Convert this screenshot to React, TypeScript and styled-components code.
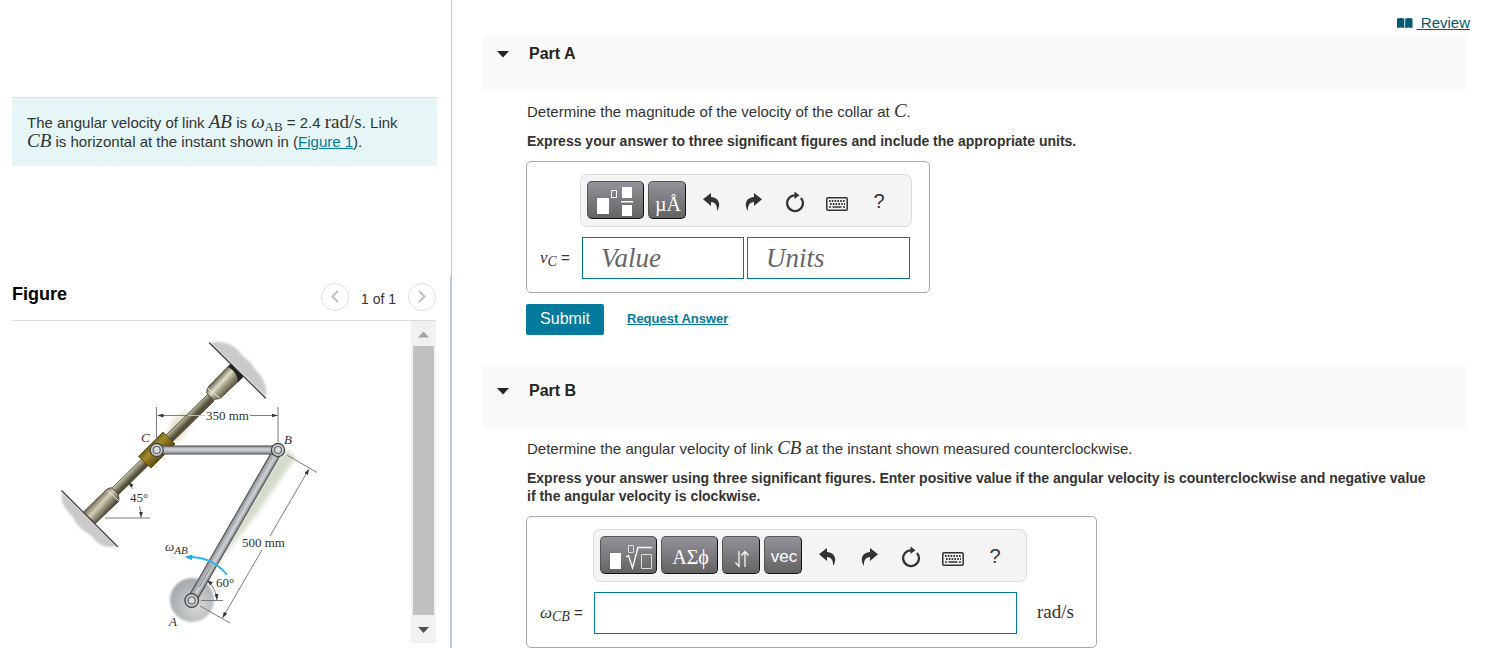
import React from "react";
import styled, { createGlobalStyle } from "styled-components";

const sans = `"Liberation Sans", Arial, sans-serif`;
const serif = `"Liberation Serif", "Times New Roman", serif`;
const teal = "#047a9c";

const GlobalStyle = createGlobalStyle`
  *, *::before, *::after { box-sizing: border-box; }
  body {
    margin: 0;
    background: #fff;
    color: #333;
    font-family: ${sans};
    font-size: 15px;
    line-height: 18px;
  }
  p, h2, h3 { margin: 0; }
  button, input { font-family: inherit; }
`;

const Page = styled.div`
  display: flex;
  align-items: flex-start;
  min-height: 100vh;
`;

const Side = styled.aside`
  flex: 0 0 452px;
  position: sticky;
  top: 0;
  display: flex;
  flex-direction: column;
  height: 100vh;
`;

const IntroPane = styled.section`
  height: 276px;
  padding: 97px 14px 0 12px;
  border-right: 1px solid #c3ccd6;
`;

const Intro = styled.p`
  padding: 15px 14px 15px 15px;
  border-top: 1px solid #d3e3e3;
  background: #e6f6f7;
  line-height: 19px;
`;

const FigurePane = styled.section`
  flex: 1;
  display: flex;
  flex-direction: column;
  padding: 0 14px 5px 12px;
  border-right: 2px solid #b9cce0;
`;

const FigureBar = styled.header`
  display: flex;
  align-items: center;
  justify-content: space-between;
  height: 45px;
  padding-bottom: 5px;
  border-bottom: 1px solid #dcdcdc;
`;

const FigureTitle = styled.h2`
  color: #000;
  font-size: 18px;
  line-height: 24px;
  padding-bottom: 3px;
`;

const Pager = styled.div`
  display: flex;
  align-items: center;
  gap: 12px;
  font-size: 14px;
  padding-top: 2px;
`;

const PagerButton = styled.button`
  display: grid;
  place-items: center;
  width: 28px;
  height: 28px;
  padding: 0;
  border: 1px solid #e0e0e0;
  border-radius: 50%;
  background: #fff;
`;

const PagerText = styled.span`
  padding-top: 4px;
`;

const FigureView = styled.div`
  flex: 1;
  display: flex;
  min-height: 0;
`;

const Drawing = styled.svg`
  flex: 1;
  min-width: 0;
  height: 322px;
  font-family: ${serif};
`;

const ScrollTrack = styled.div`
  display: flex;
  flex-direction: column;
  align-items: center;
  width: 25px;
  background: #f1f1f1;
`;

const ScrollThumb = styled.div`
  flex: 1;
  width: 21px;
  background: #c1c1c1;
`;

const ScrollArrow = styled.svg<{ $height: number }>`
  width: 25px;
  height: ${(p) => p.$height}px;
`;

const Main = styled.main`
  flex: 1;
  min-width: 0;
  padding: 0 19px 0 30px;
`;

const TopLinks = styled.nav`
  display: flex;
  justify-content: flex-end;
  align-items: center;
  gap: 4px;
  height: 36px;
  margin-right: -4px;
  padding-top: 10px;
`;

const Link = styled.a<{ $tone?: string }>`
  color: ${(p) => p.$tone ?? teal};
  text-decoration: underline;
`;

const ReviewLink = styled(Link)`
  white-space: pre;
`;

const PartHeader = styled.header<{ $tall?: boolean }>`
  display: flex;
  align-items: center;
  gap: 20px;
  padding: ${(p) => (p.$tall ? "17px 15px 28px" : "9px 15px 28px")};
  background: #f9f9f9;
`;

const PartTitle = styled.h3`
  color: #252525;
  font-size: 16px;
  line-height: 18px;
`;

const Toggle = styled.button`
  display: grid;
  padding: 0;
  border: 0;
  background: none;
`;

const PartBody = styled.div`
  display: flex;
  flex-direction: column;
  align-items: flex-start;
  gap: 11px;
  padding: 12px 0 30px 44px;
`;

const Prompt = styled.p<{ $strong?: boolean }>`
  padding-left: 1px;
  font-size: ${(p) => (p.$strong ? 14 : 15)}px;
  font-weight: ${(p) => (p.$strong ? 700 : 400)};
`;

const M = styled.span<{ $upright?: boolean; $size?: number }>`
  font-family: ${serif};
  font-style: ${(p) => (p.$upright ? "normal" : "italic")};
  font-size: ${(p) => p.$size ?? 19}px;
  line-height: 1px;
`;

const Sub = styled.sub<{ $upright?: boolean }>`
  font-style: ${(p) => (p.$upright ? "normal" : "italic")};
  font-size: ${(p) => (p.$upright ? 13 : 14)}px;
  line-height: 1px;
  vertical-align: -3px;
`;

const AnswerBox = styled.div`
  display: flex;
  flex-direction: column;
  gap: 10px;
  height: 132px;
  padding: 12px 17px 13px 13px;
  border: 1px solid #a9a9a9;
  border-radius: 5px;
`;

const Toolbar = styled.div<{ $indent: number; $width: number }>`
  display: flex;
  align-items: center;
  gap: 4px;
  width: ${(p) => p.$width}px;
  height: 53px;
  margin-left: ${(p) => p.$indent}px;
  padding: 0 6px;
  border: 1px solid #dcdcdc;
  border-radius: 7px;
  background: #f4f4f4;
`;

const Key = styled.button<{ $wide?: boolean }>`
  display: grid;
  place-items: center;
  width: ${(p) => (p.$wide ? 57 : 38)}px;
  height: 38px;
  margin-bottom: 1px;
  padding: 0;
  border: 1px solid;
  border-color: #555 #111 #111 #555;
  border-radius: 5px;
  background: linear-gradient(#94929a, #636363);
  color: #fff;
`;

const KeyText = styled.span<{ $serif?: boolean; $low?: boolean }>`
  padding: ${(p) => (p.$low ? 8 : 3)}px 0 0 2px;
  font-family: ${(p) => (p.$serif ? serif : sans)};
  font-size: ${(p) => (p.$serif ? 20 : 17)}px;
  line-height: 20px;
`;

const Tools = styled.div`
  display: flex;
`;

const Tool = styled.button`
  display: grid;
  place-items: center;
  width: 42px;
  height: 38px;
  padding: 2px 0 0;
  border: 0;
  background: none;
  color: #333;
  font-size: 20px;
`;

const EntryRow = styled.div`
  display: flex;
  align-items: center;
  gap: 3px;
`;

const EntryLabel = styled.label<{ $width: number }>`
  width: ${(p) => p.$width}px;
  white-space: nowrap;
`;

const Field = styled.input<{ $width: number }>`
  width: ${(p) => p.$width}px;
  height: 42px;
  padding: 0 18px;
  border: 1px solid ${teal};
  border-radius: 0;
  background: #fff;
  font-family: ${serif};
  font-size: 27px;
  font-style: italic;
  &::placeholder { color: #666; opacity: 1; }
`;

const Unit = styled.span`
  width: 59px;
  padding-left: 17px;
`;

const Actions = styled.div`
  display: flex;
  align-items: center;
  gap: 23px;
`;

const Submit = styled.button`
  width: 78px;
  height: 31px;
  padding: 0 0 2px;
  border: 0;
  border-radius: 2px;
  background: ${teal};
  color: #fff;
  font-size: 16px;
`;

const RequestLink = styled(Link)`
  padding-bottom: 2px;
  font-size: 13px;
  font-weight: 700;
`;

const UndoShape = () => (
  <path d="M0 6.2 8 0v3.9c5 .3 8.2 3.2 8.2 7.7 0 2.400-.9 4.500-2.100 6.400C14.300 12.600 12.500 9.300 8 9v3.900z" fill="#333" />
);

const EditTools = () => (
  <Tools>
    <Tool aria-label="Undo">
      <svg width="17" height="18"><UndoShape /></svg>
    </Tool>
    <Tool aria-label="Redo">
      <svg width="17" height="18"><g transform="translate(17 0) scale(-1 1)"><UndoShape /></g></svg>
    </Tool>
    <Tool aria-label="Reset">
      <svg width="20" height="22" fill="none">
        <path d="M10.5 4.300A7.900 7.900 0 1 0 15.900 6.900" stroke="#333" strokeWidth="2.3" />
        <path d="M9.500.500 14.500 4.300 9.500 8z" fill="#333" />
      </svg>
    </Tool>
    <Tool aria-label="Keyboard">
      <svg width="22" height="18" fill="none">
        <rect x=".8" y="4.8" width="20.4" height="12.4" rx="1.2" stroke="#333" strokeWidth="1.5" />
        <path d="M3 8h16M4 11h15" stroke="#333" strokeWidth="1.8" strokeDasharray="1.6 1.2" />
        <path d="M3 14h2M6.500 14h9M17 14h2" stroke="#333" strokeWidth="1.5" />
      </svg>
    </Tool>
    <Tool aria-label="Help">?</Tool>
  </Tools>
);

const Caret = () => (
  <svg width="12" height="7"><path d="M0 0h12L6 6.500z" fill="#252525" /></svg>
);

const Mechanism = () => (
  <Drawing viewBox="12 321 399 322" role="img" aria-label="Collar and link mechanism">
    <defs>
      <linearGradient id="rod" gradientUnits="userSpaceOnUse" x1="137" y1="457" x2="145" y2="465">
        <stop offset="0" stopColor="#66614b" />
        <stop offset=".35" stopColor="#d6d4bc" />
        <stop offset=".6" stopColor="#a39f84" />
        <stop offset="1" stopColor="#54503c" />
      </linearGradient>
      <linearGradient id="cylinder" gradientUnits="userSpaceOnUse" x1="218" y1="376" x2="232" y2="389">
        <stop offset="0" stopColor="#5f5b45" />
        <stop offset=".35" stopColor="#e0dfcb" />
        <stop offset=".55" stopColor="#aaa78d" />
        <stop offset="1" stopColor="#4e4936" />
      </linearGradient>
      <linearGradient id="cylinderLow" gradientUnits="userSpaceOnUse" x1="94" y1="501" x2="107" y2="513">
        <stop offset="0" stopColor="#6f6a50" />
        <stop offset=".4" stopColor="#d2d0b8" />
        <stop offset="1" stopColor="#4b4633" />
      </linearGradient>
      <linearGradient id="collar" gradientUnits="userSpaceOnUse" x1="150" y1="444" x2="163" y2="456">
        <stop offset="0" stopColor="#6f5c10" />
        <stop offset=".35" stopColor="#a28a2c" />
        <stop offset="1" stopColor="#5c4b08" />
      </linearGradient>
      <linearGradient id="bar" x1="0" y1="0" x2="0" y2="1">
        <stop offset="0" stopColor="#85888b" />
        <stop offset=".4" stopColor="#d2d5d7" />
        <stop offset="1" stopColor="#8d9093" />
      </linearGradient>
      <radialGradient id="disc" cx=".6" cy=".65" r=".65">
        <stop offset="0" stopColor="#d7d9da" />
        <stop offset="1" stopColor="#a4a7aa" />
      </radialGradient>
      <filter id="soft" x="-20%" y="-20%" width="140%" height="140%"><feGaussianBlur stdDeviation="2" /></filter>
      <filter id="softer" x="-20%" y="-20%" width="140%" height="140%"><feGaussianBlur stdDeviation="0.8" /></filter>
      <marker id="tip" viewBox="0 0 6 4" refX="6" refY="2" markerWidth="6" markerHeight="4" markerUnits="userSpaceOnUse" orient="auto-start-reverse">
        <path d="M0 0 6 2 0 4z" fill="#333" />
      </marker>
    </defs>

    <path d="M172 420 184 410 194 421 178 444 166 436z" fill="#e6e6d2" filter="url(#soft)" />
    <path d="M276 458 288 450 296 457 256 515 216 566z" fill="#d5dbca" filter="url(#soft)" />

    <g filter="url(#softer)" fill="#cbc9ca">
      <path d="M210 343C218 341 229 342 238 350 243 358 251 361 254 368 260 374 268 384 266 397z" />
      <path d="M62 492C60 503 66 510 73 517 75 524 83 531 92 536 98 545 106 549 117 546z" />
    </g>
    <path d="M209 342.500 266 398.500M61.500 490.500 118 547" stroke="#3d3d3d" strokeWidth="1.2" />

    <circle cx="192" cy="600" r="22" fill="url(#disc)" filter="url(#softer)" />

    <g stroke="#3c392c" strokeWidth=".8">
      <path d="M208 394 111 489 118 495 214 401z" fill="url(#rod)" />
      <path d="M230 364.500 207.500 387.500 206.500 393 213.500 399.500 220 398.500 243 377z" fill="url(#cylinder)" />
      <path d="M106.500 489.500 111 487.500 118.500 494 119 501 95.500 523.500 83.500 512z" fill="url(#cylinderLow)" />
    </g>
    <path d="M230.500 364 243 376.500 238 382C238 376 234 370 228 367z" fill="#222" />
    <path d="M207 387.500 220 398.500M107 490 119 501" stroke="#f0efdf" strokeWidth="1" />
    <path d="M163 432 175 444 151 468 138.500 456.500z" fill="url(#collar)" stroke="#4c3f0c" strokeWidth=".8" />

    <g transform="translate(278 450) rotate(119.9)">
      <rect x="0" y="-4.5" width="173" height="9" fill="url(#bar)" stroke="#4a4a4a" strokeWidth="1" />
      <path d="M132 0H158" stroke="#888" strokeWidth="1" />
    </g>
    <rect x="157" y="446" width="121" height="8" fill="url(#bar)" stroke="#4a4a4a" strokeWidth="1" />
    <g fill="#c7cacc" stroke="#3f3f3f" strokeWidth="1.2">
      <circle cx="156.7" cy="450" r="6.6" />
      <circle cx="278" cy="450" r="6.6" />
      <circle cx="191.7" cy="600.5" r="6.8" />
      <g fill="#d9dbdc" stroke="#666">
        <circle cx="156.7" cy="450" r="3.5" />
        <circle cx="278" cy="450" r="3.5" />
        <circle cx="191.7" cy="600.5" r="3.5" />
      </g>
    </g>

    <g stroke="#707070" strokeWidth=".9" fill="none">
      <path d="M156.500 407V442M278 407V442" />
      <path d="M190 415.500H157.500" markerEnd="url(#tip)" />
      <path d="M250 415.500H277.500" markerEnd="url(#tip)" />
      <path d="M105 518H150M201 600.500H223M287 455 317 472.500M200 606 230 623" />
      <path d="M128 482Q131 485 133 489" markerStart="url(#tip)" />
      <path d="M139.500 506Q141 511 141 517.500" markerEnd="url(#tip)" />
      <path d="M207 580Q216 588 217 600" markerStart="url(#tip)" markerEnd="url(#tip)" />
      <path d="M270 536 309 469" markerEnd="url(#tip)" />
      <path d="M262 550 222.500 618" markerEnd="url(#tip)" />
    </g>
    <path d="M188 415.500H205" stroke="#c9c9b9" strokeWidth=".9" />
    <path d="M227 575Q214 558 191 557" stroke="#2fb5ef" strokeWidth="1.8" fill="none" />
    <path d="M184.500 557 192.500 554.500 192 560z" fill="#18a9ea" />

    <g fill="#333" fontSize="13">
      <text x="206" y="420">350 mm</text>
      <text x="242" y="547">500 mm</text>
      <text x="130" y="502">45°</text>
      <text x="216" y="587">60°</text>
      <g fontStyle="italic">
        <text x="141" y="442">C</text>
        <text x="284" y="444">B</text>
        <text x="169" y="626">A</text>
        <text x="165" y="551">ω<tspan fontSize="11" dy="3">AB</tspan></text>
      </g>
    </g>
  </Drawing>
);

export default function App() {
  return (
    <Page>
      <GlobalStyle />
      <Side>
        <IntroPane>
          <Intro>
            The angular velocity of link <M>AB</M> is <M>ω<Sub $upright>AB</Sub></M> = 2.4 <M $upright>rad/s</M>. Link{" "}
            <M>CB</M>&nbsp;is horizontal at the instant shown in (<Link href="#figure">Figure 1</Link>).
          </Intro>
        </IntroPane>
        <FigurePane id="figure">
          <FigureBar>
            <FigureTitle>Figure</FigureTitle>
            <Pager>
              <PagerButton aria-label="Previous figure">
                <svg width="8" height="13" fill="none"><path d="M7 1 1.500 6.500 7 12" stroke="#c0c0c0" strokeWidth="2" /></svg>
              </PagerButton>
              <PagerText>1 of 1</PagerText>
              <PagerButton aria-label="Next figure">
                <svg width="8" height="13" fill="none"><path d="M1 1 6.500 6.500 1 12" stroke="#c0c0c0" strokeWidth="2" /></svg>
              </PagerButton>
            </Pager>
          </FigureBar>
          <FigureView>
            <Mechanism />
            <ScrollTrack>
              <ScrollArrow $height={25}><path d="M7 16.500 12.500 10.500 18 16.500z" fill="#a3a3a3" /></ScrollArrow>
              <ScrollThumb />
              <ScrollArrow $height={28}><path d="M7 12H18L12.500 18z" fill="#505050" /></ScrollArrow>
            </ScrollTrack>
          </FigureView>
        </FigurePane>
      </Side>

      <Main>
        <TopLinks>
          <svg width="16" height="12"><path d="M0 1.500Q4 .500 7.300 1.500V11Q4 10 0 11zM8.200 1.500Q12 .500 15.500 1.500V11Q12 10 8.200 11z" fill="#005a70" /></svg>
          <ReviewLink href="#review" $tone="#005a70"> Review</ReviewLink>
        </TopLinks>

        <section>
          <PartHeader>
            <Toggle aria-label="Collapse Part A"><Caret /></Toggle>
            <PartTitle>Part A</PartTitle>
          </PartHeader>
          <PartBody>
            <Prompt>Determine the magnitude of the velocity of the collar at <M>C</M>.</Prompt>
            <Prompt $strong>Express your answer to three significant figures and include the appropriate units.</Prompt>
            <AnswerBox>
              <Toolbar $indent={40} $width={332}>
                <Key $wide aria-label="Templates">
                  <svg width="40" height="34">
                    <path d="M1 15h12v16H1zM26 4h10v11H26zM26 22h10v11H26zM25 18h12v1.500H25z" fill="#fff" />
                    <path d="M15.500 7.500h5v7h-5z" fill="none" stroke="#fff" />
                  </svg>
                </Key>
                <Key aria-label="Symbols"><KeyText $serif $low>µÅ</KeyText></Key>
                <EditTools />
              </Toolbar>
              <EntryRow>
                <EntryLabel htmlFor="value" $width={39}><M $size={17}>v<Sub>C</Sub></M> =</EntryLabel>
                <Field id="value" $width={162} placeholder="Value" />
                <Field aria-label="Units" $width={163} placeholder="Units" />
              </EntryRow>
            </AnswerBox>
            <Actions>
              <Submit>Submit</Submit>
              <RequestLink href="#answer">Request Answer</RequestLink>
            </Actions>
          </PartBody>
        </section>

        <section>
          <PartHeader $tall>
            <Toggle aria-label="Collapse Part B"><Caret /></Toggle>
            <PartTitle>Part B</PartTitle>
          </PartHeader>
          <PartBody>
            <Prompt>Determine the angular velocity of link <M>CB</M> at the instant shown measured counterclockwise.</Prompt>
            <Prompt $strong>
              Express your answer using three significant figures. Enter positive value if the angular velocity is
              counterclockwise and negative value<br />
              if the angular velocity is clockwise.
            </Prompt>
            <AnswerBox>
              <Toolbar $indent={53} $width={434}>
                <Key $wide aria-label="Templates">
                  <svg width="46" height="30" fill="none">
                    <path d="M4 13h11v16H4z" fill="#fff" />
                    <path d="M22.500 5.500h5v7h-5zM35.500 14.500h10v14h-10z" stroke="#ddd" />
                    <path d="M20 17l2.500-1.500 4 12.500L32 7.500H46" stroke="#fff" strokeWidth="1.3" />
                  </svg>
                </Key>
                <Key $wide aria-label="Greek letters"><KeyText $serif>ΑΣϕ</KeyText></Key>
                <Key aria-label="Arrows">
                  <svg width="20" height="30" fill="none" stroke="#fff" strokeWidth="1.2">
                    <path d="M8 11V26M4.500 22.500 8 26.500V11M14 27V12M10.500 15.500 14 11.500 17.500 15.500" />
                  </svg>
                </Key>
                <Key aria-label="Vector"><KeyText>vec</KeyText></Key>
                <EditTools />
              </Toolbar>
              <EntryRow>
                <EntryLabel htmlFor="omega" $width={51}><M $size={17}>ω<Sub>CB</Sub></M> =</EntryLabel>
                <Field id="omega" $width={423} />
                <Unit><M $upright>rad/s</M></Unit>
              </EntryRow>
            </AnswerBox>
          </PartBody>
        </section>
      </Main>
    </Page>
  );
}
